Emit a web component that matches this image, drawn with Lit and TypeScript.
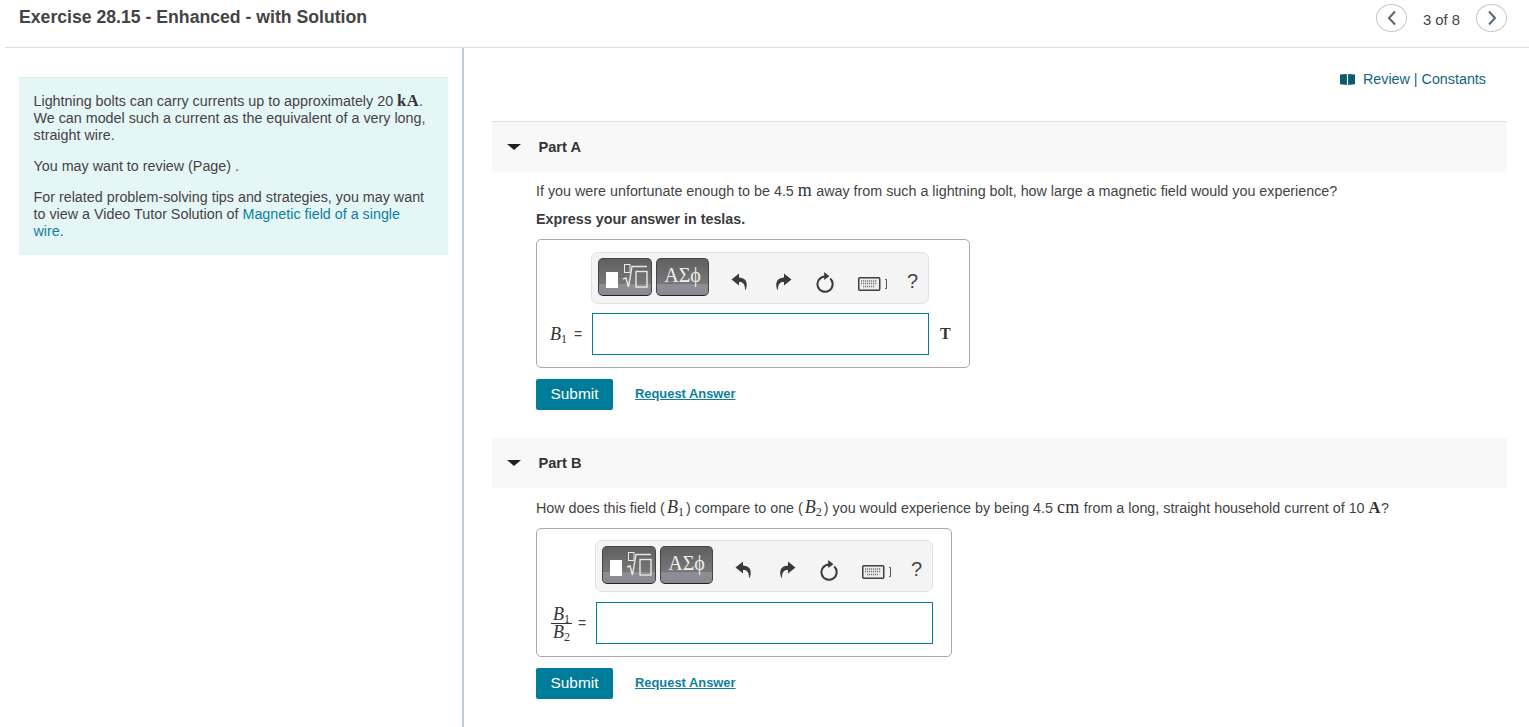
import { LitElement, html, css, svg } from "lit";
import { customElement, property } from "lit/decorators.js";

const undoIcon = svg`<svg class="ti" width="18" height="20" viewBox="0 0 18 20"><path d="M8 1.5 L0.5 7.5 L8 13.5 V10 C11.5 9.8 14 11.2 14.2 18.5 C16.8 13.5 17 6 8 5.4 Z" fill="#3a3a3a"/></svg>`;
const redoIcon = svg`<svg class="ti" width="18" height="20" viewBox="0 0 18 20"><path d="M10 1.5 L17.5 7.5 L10 13.5 V10 C6.5 9.8 4 11.2 3.8 18.5 C1.2 13.5 1 6 10 5.4 Z" fill="#3a3a3a"/></svg>`;
const resetIcon = svg`<svg class="ti" width="20" height="22" viewBox="0 0 20 22"><path d="M14.2 7.6 A7.6 7.6 0 1 1 9 5.6" fill="none" stroke="#3a3a3a" stroke-width="2"/><path d="M8.2 1 L13.4 5.2 L8.2 9 Z" fill="#3a3a3a"/></svg>`;
const keyboardIcon = svg`<svg class="ti" width="30" height="14" viewBox="0 0 30 14"><rect x="0.75" y="0.75" width="21" height="12.5" rx="1" fill="#ededed" stroke="#3f3f3f" stroke-width="1.5"/><path d="M3 4h16M3 6.6h16M5 9.4h12" stroke="#777" stroke-width="1.5" stroke-dasharray="1.2 .8"/><path d="M27 2.5h1.5v9h-1.5" fill="none" stroke="#555"/></svg>`;
const bookIcon = svg`<svg width="15" height="11" viewBox="0 0 15 11"><path d="M0 0.5 L6.9 0 V11 L0 10.2 Z M8.1 0 L15 0.5 V10.2 L8.1 11 Z" fill="#0b5b70"/></svg>`;

@customElement("math-toolbar")
class MathToolbar extends LitElement {
  static styles = css`
    :host { display: flex; align-items: center; box-sizing: border-box; width: 338px; height: 52px;
      background: #f4f4f4; border: 1px solid #e2e2e2; border-radius: 7px; padding: 5px 0 0 6px; }
    .btns { display: flex; gap: 4px; align-self: flex-start; }
    .b { box-sizing: border-box; height: 38px; border: 1px solid #444; border-bottom-color: #222; border-radius: 5px;
      background: linear-gradient(#5f5f5f 0%, #787878 70%, #8e8e96 71%, #88888f 100%);
      display: flex; justify-content: center; color: #eee; }
    .b1 { width: 54px; }
    .b2 { width: 53px; font: 20px/33px "Liberation Serif", serif; }
    .tools { flex: 1; display: flex; align-items: center; height: 38px; align-self: flex-start; padding-top: 5px; }
    .ti { display: block; flex: none; }
    .t1 { margin-left: 22px; } .t2 { margin-left: 25px; } .t3 { margin-left: 24px; }
    .t4 { margin-left: 22px; margin-top: 3px; }
    .q { margin-left: 19px; font: 20px "Liberation Sans", sans-serif; color: #444; margin-top: -2px; }
  `;
  render() {
    return html`
      <div class="btns">
        <div class="b b1"><svg width="52" height="36" viewBox="0 0 52 36">
          <rect x="7" y="13" width="12" height="16" fill="#fff"/>
          <rect x="25.5" y="5.5" width="5.5" height="8" fill="none" stroke="#e8e8e8"/>
          <path d="M24 20 L27 19 L29.5 28 L33 7.5 H48" fill="none" stroke="#e8e8e8" stroke-width="1.4"/>
          <rect x="37" y="12.5" width="11" height="15.5" fill="none" stroke="#e8e8e8" stroke-width="1.4"/>
        </svg></div>
        <div class="b b2">ΑΣϕ</div>
      </div>
      <div class="tools">
        <span class="t1">${undoIcon}</span>
        <span class="t2">${redoIcon}</span>
        <span class="t3">${resetIcon}</span>
        <span class="t4">${keyboardIcon}</span>
        <span class="q">?</span>
      </div>`;
  }
}

@customElement("part-section")
class PartSection extends LitElement {
  @property() label = "";
  static styles = css`
    :host { display: block; }
    .head { height: 50px; background: #f8f8f8; display: flex; align-items: center; }
    .tri { width: 0; height: 0; border-left: 7px solid transparent; border-right: 7px solid transparent;
      border-top: 6px solid #222; margin: 0 17.5px 0 15px; }
    .name { font: bold 14.6px "Liberation Sans", sans-serif; color: #333; }
    .body { padding-left: 44px; }
  `;
  render() {
    return html`<div class="head"><span class="tri"></span><span class="name">${this.label}</span></div>
      <div class="body"><slot></slot></div>`;
  }
}

@customElement("app-root")
class AppRoot extends LitElement {
  static styles = css`
    :host { display: block; width: 1529px; height: 727px; overflow: hidden; background: #fff;
      font: 14.32px/17px "Liberation Sans", Arial, sans-serif; color: #444; }
    * { box-sizing: border-box; }
    a { color: #0f7f9f; text-decoration: none; }
    .top { height: 48px; margin-left: 5px; border-bottom: 1px solid #dedede; display: flex; padding: 0 0 0 14px; }
    .title { font: bold 17.65px/34px "Liberation Sans", sans-serif; color: #444; flex: 1; }
    .pager { display: flex; align-items: flex-start; padding-top: 4px; padding-right: 22px; font-size: 14.8px; line-height: 32px; }
    .pbtn { width: 31px; height: 28px; border: 1px solid #c8c8c8; border-radius: 50%; display: flex; align-items: center; justify-content: center; }
    .pnum { width: 69px; text-align: center; color: #444; }
    .main { display: flex; height: 679px; }
    .left { width: 464px; flex: none; border-right: 2px solid #b9cde0; padding: 29px 14px 0 19px; }
    .info { background: #e5f6f6; border-top: 1px solid #dcebeb; padding: 14px 19px 15px 14.5px; height: 178px; color: #444; }
    .info p { margin: 0 0 14px; }
    .info p:last-child { margin: 0; }
    .unit { font: bold 16.5px/17px "Liberation Serif", serif; color: #333; letter-spacing: .4px; }
    .unitr { font: 18px/17px "Liberation Serif", serif; color: #333; letter-spacing: .4px; }
    .v { font: italic 18px/17px "Liberation Serif", serif; color: #333; padding: 0 2px; }
    sub { font: 12px/0 "Liberation Serif", serif; font-style: normal; vertical-align: -3px; }
    .right { flex: 1; padding: 23px 22px 0 28px; }
    .review { display: flex; justify-content: flex-end; align-items: center; gap: 8px; height: 17px; padding-right: 21px; }
    .review a { color: #12657d; }
    .partA { border-top: 1px solid #dedede; margin-top: 33px; }
    .partB { margin-top: 28px; }
    .q { margin: 10px 0 0; }
    .partB .q { margin-top: 11px; }
    .exp { margin: 11px 0 0; font-weight: bold; color: #3c3c3c; }
    .box { margin-top: 11px; border: 1px solid #a9a9a9; border-radius: 5px; padding: 12px 0 0; height: 129px; }
    .boxA { width: 434px; }
    .boxB { width: 416px; margin-top: 11px; padding-top: 11px; }
    .tbar { margin-left: 54px; }
    .boxB .tbar { margin-left: 58px; }
    .row { display: flex; align-items: center; margin-top: 9px; }
    .boxB .row { margin-top: 10px; }
    .lhs { width: 55px; padding-left: 13px; display: flex; align-items: center; gap: 5px; font: 14px "Liberation Sans", sans-serif; flex: none; }
    .lhs .v { padding: 0; }
    .boxA .lhs { gap: 7px; }
    .boxB .lhs { width: 59px; padding-left: 14px; gap: 6px; }
    .inp { height: 42px; width: 337px; border: 1px solid #007c9b; background: #fff; flex: none; }
    .tu { margin-left: 11px; font: bold 16px "Liberation Serif", serif; color: #333; }
    .frac { display: inline-flex; flex-direction: column; align-items: center; line-height: 16px; }
    .frac .n { border-bottom: 1px solid #333; padding: 0 2px 1px; }
    .actions { display: flex; align-items: center; margin-top: 11px; }
    .submit { width: 77px; height: 31px; background: #007c9b; color: #fff; border: none; border-radius: 2px; font: 15.4px "Liberation Sans", sans-serif; padding: 0 0 2px; }
    .req { margin-left: 22px; margin-top: -2px; font: bold 12.9px "Liberation Sans", sans-serif; color: #0f7f9f; text-decoration: underline; }
  `;
  render() {
    return html`
      <div class="top">
        <div class="title">Exercise 28.15 - Enhanced - with Solution</div>
        <div class="pager">
          <div class="pbtn"><svg width="10" height="16" viewBox="0 0 10 16"><path d="M8 1.5 L2 8 L8 14.5" fill="none" stroke="#55697a" stroke-width="2"/></svg></div>
          <div class="pnum">3 of 8</div>
          <div class="pbtn"><svg width="10" height="16" viewBox="0 0 10 16"><path d="M2 1.5 L8 8 L2 14.5" fill="none" stroke="#55697a" stroke-width="2"/></svg></div>
        </div>
      </div>
      <div class="main">
        <div class="left">
          <div class="info">
            <p>Lightning bolts can carry currents up to approximately 20 <span class="unit">kA</span>. We can model such a current as the equivalent of a very long, straight wire.</p>
            <p>You may want to review (Page) .</p>
            <p>For related problem-solving tips and strategies, you may want to view a Video Tutor Solution of <a href="#">Magnetic field of a single wire</a>.</p>
          </div>
        </div>
        <div class="right">
          <div class="review">${bookIcon}<a href="#">Review | Constants</a></div>
          <part-section class="partA" label="Part A">
            <p class="q">If you were unfortunate enough to be 4.5 <span class="unitr">m</span> away from such a lightning bolt, how large a magnetic field would you experience?</p>
            <p class="exp">Express your answer in teslas.</p>
            <div class="box boxA">
              <math-toolbar class="tbar"></math-toolbar>
              <div class="row">
                <div class="lhs"><span class="v">B<sub>1</sub></span><span>=</span></div>
                <div class="inp"></div>
                <span class="tu">T</span>
              </div>
            </div>
            <div class="actions"><button class="submit">Submit</button><a class="req" href="#">Request Answer</a></div>
          </part-section>
          <part-section class="partB" label="Part B">
            <p class="q">How does this field (<span class="v">B<sub>1</sub></span>) compare to one (<span class="v">B<sub>2</sub></span>) you would experience by being 4.5 <span class="unitr">cm</span> from a long, straight household current of 10 <span class="unit">A</span>?</p>
            <div class="box boxB">
              <math-toolbar class="tbar"></math-toolbar>
              <div class="row">
                <div class="lhs"><span class="frac v"><span class="n">B<sub>1</sub></span><span>B<sub>2</sub></span></span><span>=</span></div>
                <div class="inp"></div>
              </div>
            </div>
            <div class="actions"><button class="submit">Submit</button><a class="req" href="#">Request Answer</a></div>
          </part-section>
        </div>
      </div>`;
  }
}
